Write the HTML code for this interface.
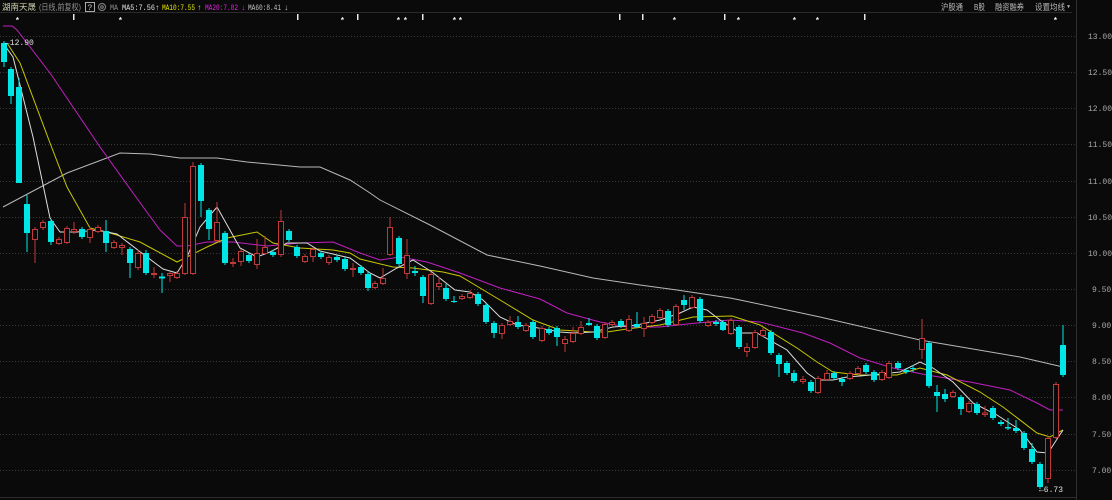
<!DOCTYPE html>
<html><head><meta charset="utf-8"><style>
html,body{margin:0;padding:0;background:#0a0a0a;width:1112px;height:500px;overflow:hidden}
svg{display:block}
text{font-family:"Liberation Mono","Noto Sans CJK SC",monospace;font-size:8px}
.c line{stroke:#00e6e6;stroke-width:1}
.c rect{fill:#00e6e6}
.r line{stroke:#c03a3a;stroke-width:1}
.r rect{fill:#0a0a0a;stroke:#c03a3a;stroke-width:1}
.g{stroke:#3a3a3a;stroke-width:1;stroke-dasharray:1 2}
.cj{font-family:"Liberation Sans","Noto Sans CJK SC",sans-serif;font-size:8.5px}
</style></head><body>
<svg width="1112" height="500" viewBox="0 0 1112 500" xmlns="http://www.w3.org/2000/svg">
<rect width="1112" height="500" fill="#0a0a0a"/>
<text class="cj" x="2" y="10" fill="#d0d0b0" textLength="34" lengthAdjust="spacingAndGlyphs">湖南天晟</text>
<text class="cj" x="39" y="10" fill="#909090" textLength="42" lengthAdjust="spacingAndGlyphs">(日线,前复权)</text>
<rect x="85.5" y="2.5" width="9" height="9" fill="none" stroke="#aaa"/>
<text x="87.5" y="10" fill="#ccc">?</text>
<circle cx="102" cy="7" r="3.5" fill="none" stroke="#888"/><circle cx="102" cy="7" r="1.3" fill="none" stroke="#888"/>
<text x="110" y="10" fill="#909090" textLength="8" lengthAdjust="spacingAndGlyphs">MA</text>
<text x="122" y="10" fill="#e0e0e0" textLength="33" lengthAdjust="spacingAndGlyphs">MA5:7.56</text><text x="155" y="10" fill="#e0e0e0">↑</text>
<text x="162" y="10" fill="#e0e000" textLength="33" lengthAdjust="spacingAndGlyphs">MA10:7.55</text><text x="197" y="10" fill="#e0e000">↑</text>
<text x="205" y="10" fill="#e020e0" textLength="33" lengthAdjust="spacingAndGlyphs">MA20:7.82</text><text x="241" y="10" fill="#e020e0">↓</text>
<text x="248" y="10" fill="#c0c0c0" textLength="33" lengthAdjust="spacingAndGlyphs">MA60:8.41</text><text x="284" y="10" fill="#c0c0c0">↓</text>
<g fill="#b8b8b8">
<text class="cj" x="941" y="10" textLength="22" lengthAdjust="spacingAndGlyphs">沪股通</text>
<text class="cj" x="974" y="10" textLength="11" lengthAdjust="spacingAndGlyphs">B股</text>
<text class="cj" x="995" y="10" textLength="29" lengthAdjust="spacingAndGlyphs">融资融券</text>
<text class="cj" x="1035" y="10" textLength="30" lengthAdjust="spacingAndGlyphs">设置均线</text>
<text x="1067" y="8" style="font-size:5px">▼</text>
</g>
<line x1="0" y1="12.5" x2="1072" y2="12.5" stroke="#2a2a2a"/>
<line x1="1076.5" y1="0" x2="1076.5" y2="500" stroke="#2e2e2e"/>
<line x1="0" y1="497.5" x2="1076" y2="497.5" stroke="#2e2e2e"/>
<g fill="#f0f0f0" style="font-size:11px;font-weight:bold">
<text x="15" y="23">*</text><text x="118" y="23">*</text><text x="340" y="23">*</text><text x="396" y="23">*</text><text x="403" y="23">*</text><text x="452" y="23">*</text><text x="458" y="23">*</text><text x="672" y="23">*</text><text x="736" y="23">*</text><text x="792" y="23">*</text><text x="815" y="23">*</text><text x="1053" y="23">*</text>
</g>
<g fill="#e8e8e8">
<rect x="73" y="14" width="1.5" height="6"/><rect x="297" y="14" width="1.5" height="6"/><rect x="357" y="14" width="1.5" height="6"/><rect x="422" y="14" width="1.5" height="6"/><rect x="619" y="14" width="1.5" height="6"/><rect x="642" y="14" width="1.5" height="6"/><rect x="724" y="14" width="1.5" height="6"/><rect x="864" y="14" width="1.5" height="6"/>
</g>
<g class="g">
<line x1="0" x2="1076" y1="36.5" y2="36.5"/><line x1="0" x2="1076" y1="72.5" y2="72.5"/><line x1="0" x2="1076" y1="108.5" y2="108.5"/><line x1="0" x2="1076" y1="144.5" y2="144.5"/><line x1="0" x2="1076" y1="181.5" y2="181.5"/><line x1="0" x2="1076" y1="217.5" y2="217.5"/><line x1="0" x2="1076" y1="253.5" y2="253.5"/><line x1="0" x2="1076" y1="289.5" y2="289.5"/><line x1="0" x2="1076" y1="325.5" y2="325.5"/><line x1="0" x2="1076" y1="361.5" y2="361.5"/><line x1="0" x2="1076" y1="397.5" y2="397.5"/><line x1="0" x2="1076" y1="434.5" y2="434.5"/><line x1="0" x2="1076" y1="470.5" y2="470.5"/>
</g>
<g fill="#a8a8a8">
<text x="1088" y="39">13.00</text><text x="1088" y="75">12.50</text><text x="1088" y="111">12.00</text><text x="1088" y="147">11.50</text><text x="1088" y="184">11.00</text><text x="1088" y="220">10.50</text><text x="1088" y="256">10.00</text><text x="1092" y="292">9.50</text><text x="1092" y="328">9.00</text><text x="1092" y="364">8.50</text><text x="1092" y="400">8.00</text><text x="1092" y="437">7.50</text><text x="1092" y="473">7.00</text>
</g>
<polyline fill="none" stroke="#b8b8b8" points="3,207 67,173 120,153 150,154 180,158 217,158 247,162 300,167 320,167 350,180 370,193 380,200 430,225 487,255 540,266 593,278 640,285 677,290 730,298 740,300 820,317 920,340 1020,357 1063,367"/>
<polyline fill="none" stroke="#c020c0" points="3,26 12,26 17,30 50,73 100,147 133,193 160,230 177,246 187,246 207,242 233,242 267,246 300,243 333,242 360,253 380,260 400,257 427,262 460,273 500,288 540,299 567,313 600,322 627,327 660,327 687,324 730,320 760,322 803,333 830,343 860,358 893,368 927,375 970,382 1010,390 1037,403 1050,410 1063,410"/>
<polyline fill="none" stroke="#c8c800" points="7,43 20,63 50,143 67,187 90,228 110,233 140,242 177,262 187,257 207,247 227,238 257,232 273,243 300,248 333,250 350,253 360,259 393,267 413,268 443,272 460,276 480,288 500,300 533,320 560,330 593,332 607,332 627,329 660,325 693,317 732,316 760,325 797,348 817,362 833,372 860,375 897,375 920,368 947,375 980,392 1003,407 1037,433 1050,437 1063,430"/>
<polyline fill="none" stroke="#dcdcdc" points="3,43 13,57 33,137 50,218 60,232 77,232 97,230 117,234 143,254 163,269 177,273 187,257 200,227 217,207 240,248 257,257 270,252 287,243 307,243 320,251 350,258 370,273 380,278 397,268 413,260 432,272 455,290 470,292 483,300 500,317 517,325 533,327 560,332 573,333 593,332 613,327 637,325 660,320 680,313 693,307 707,310 720,320 740,333 757,333 787,350 807,373 817,380 833,380 847,377 860,376 900,372 920,362 933,368 953,382 973,403 997,415 1020,430 1037,452 1048,453 1063,430"/>
<g class="c">
<line x1="4" x2="4" y1="41" y2="67"/><rect x="1" y="43" width="6" height="19"/>
<line x1="11" x2="11" y1="67" y2="104"/><rect x="8" y="69" width="6" height="27"/>
<line x1="19" x2="19" y1="78" y2="183"/><rect x="16" y="87" width="6" height="96"/>
<line x1="27" x2="27" y1="195" y2="252"/><rect x="24" y="204" width="6" height="29"/>
<line x1="51" x2="51" y1="219" y2="245"/><rect x="48" y="221" width="6" height="21"/>
<line x1="82" x2="82" y1="227" y2="239"/><rect x="79" y="229" width="6" height="8"/>
<line x1="106" x2="106" y1="220" y2="252"/><rect x="103" y="231" width="6" height="12"/>
<line x1="130" x2="130" y1="247" y2="278"/><rect x="127" y="249" width="6" height="14"/>
<line x1="146" x2="146" y1="250" y2="275"/><rect x="143" y="253" width="6" height="20"/>
<line x1="162" x2="162" y1="273" y2="293"/><rect x="159" y="276.5" width="6" height="2"/>
<line x1="201" x2="201" y1="163" y2="217"/><rect x="198" y="165" width="6" height="36"/>
<line x1="209" x2="209" y1="208" y2="240"/><rect x="206" y="210" width="6" height="19"/>
<line x1="225" x2="225" y1="231" y2="265"/><rect x="222" y="233" width="6" height="30"/>
<line x1="249" x2="249" y1="253" y2="263"/><rect x="246" y="255" width="6" height="6"/>
<line x1="273" x2="273" y1="250" y2="257"/><rect x="270" y="252" width="6" height="3"/>
<line x1="289" x2="289" y1="229" y2="242"/><rect x="286" y="231" width="6" height="9"/>
<line x1="297" x2="297" y1="245" y2="258"/><rect x="294" y="247" width="6" height="9"/>
<line x1="321" x2="321" y1="251" y2="259"/><rect x="318" y="253" width="6" height="4"/>
<line x1="337" x2="337" y1="255" y2="262"/><rect x="334" y="257" width="6" height="3"/>
<line x1="345" x2="345" y1="257" y2="271"/><rect x="342" y="259" width="6" height="10"/>
<line x1="361" x2="361" y1="265" y2="275"/><rect x="358" y="267" width="6" height="6"/>
<line x1="368" x2="368" y1="272" y2="291"/><rect x="365" y="274" width="6" height="14"/>
<line x1="399" x2="399" y1="236" y2="266"/><rect x="396" y="238" width="6" height="26"/>
<line x1="415" x2="415" y1="266" y2="276"/><rect x="412" y="271" width="6" height="2"/>
<line x1="423" x2="423" y1="275" y2="303"/><rect x="420" y="277" width="6" height="19"/>
<line x1="446" x2="446" y1="284" y2="301"/><rect x="443" y="288" width="6" height="11"/>
<line x1="454" x2="454" y1="296" y2="303"/><rect x="451" y="301" width="6" height="1"/>
<line x1="478" x2="478" y1="292" y2="306"/><rect x="475" y="294" width="6" height="10"/>
<line x1="486" x2="486" y1="303" y2="324"/><rect x="483" y="305" width="6" height="17"/>
<line x1="494" x2="494" y1="321" y2="338"/><rect x="491" y="323" width="6" height="10"/>
<line x1="518" x2="518" y1="316" y2="329"/><rect x="515" y="322" width="6" height="5"/>
<line x1="533" x2="533" y1="320" y2="339"/><rect x="530" y="322" width="6" height="15"/>
<line x1="549" x2="549" y1="327" y2="335"/><rect x="546" y="329" width="6" height="4"/>
<line x1="557" x2="557" y1="326" y2="346"/><rect x="554" y="328" width="6" height="9"/>
<line x1="589" x2="589" y1="318" y2="326"/><rect x="586" y="323" width="6" height="2"/>
<line x1="597" x2="597" y1="324" y2="340"/><rect x="594" y="326" width="6" height="12"/>
<line x1="621" x2="621" y1="319" y2="328"/><rect x="618" y="321" width="6" height="5"/>
<line x1="637" x2="637" y1="312" y2="328"/><rect x="634" y="324" width="6" height="3"/>
<line x1="668" x2="668" y1="309" y2="327"/><rect x="665" y="311" width="6" height="14"/>
<line x1="684" x2="684" y1="295" y2="310"/><rect x="681" y="300" width="6" height="5"/>
<line x1="700" x2="700" y1="297" y2="323"/><rect x="697" y="299" width="6" height="22"/>
<line x1="716" x2="716" y1="320" y2="326"/><rect x="713" y="322" width="6" height="2"/>
<line x1="723" x2="723" y1="320" y2="331"/><rect x="720" y="322" width="6" height="8"/>
<line x1="739" x2="739" y1="325" y2="349"/><rect x="736" y="327" width="6" height="20"/>
<line x1="771" x2="771" y1="330" y2="355"/><rect x="768" y="332" width="6" height="21"/>
<line x1="779" x2="779" y1="353" y2="377"/><rect x="776" y="355" width="6" height="9"/>
<line x1="787" x2="787" y1="361" y2="375"/><rect x="784" y="363" width="6" height="10"/>
<line x1="794" x2="794" y1="370" y2="383"/><rect x="791" y="373" width="6" height="8"/>
<line x1="811" x2="811" y1="380" y2="393"/><rect x="808" y="382" width="6" height="9"/>
<line x1="834" x2="834" y1="371" y2="380"/><rect x="831" y="373" width="6" height="5"/>
<line x1="842" x2="842" y1="377" y2="386"/><rect x="839" y="379" width="6" height="3"/>
<line x1="866" x2="866" y1="363" y2="374"/><rect x="863" y="365" width="6" height="7"/>
<line x1="874" x2="874" y1="370" y2="382"/><rect x="871" y="372" width="6" height="8"/>
<line x1="898" x2="898" y1="361" y2="370"/><rect x="895" y="363" width="6" height="5"/>
<line x1="906" x2="906" y1="368" y2="374"/><rect x="903" y="370" width="6" height="2"/>
<line x1="913" x2="913" y1="365" y2="372"/><rect x="910" y="368" width="6" height="1"/>
<line x1="929" x2="929" y1="341" y2="388"/><rect x="926" y="343" width="6" height="43"/>
<line x1="937" x2="937" y1="385" y2="412"/><rect x="934" y="392" width="6" height="4"/>
<line x1="945" x2="945" y1="389" y2="402"/><rect x="942" y="394" width="6" height="5"/>
<line x1="961" x2="961" y1="395" y2="415"/><rect x="958" y="397" width="6" height="12"/>
<line x1="977" x2="977" y1="402" y2="415"/><rect x="974" y="404" width="6" height="9"/>
<line x1="993" x2="993" y1="406" y2="420"/><rect x="990" y="408" width="6" height="10"/>
<line x1="1001" x2="1001" y1="420" y2="426"/><rect x="998" y="422" width="6" height="2"/>
<line x1="1008" x2="1008" y1="418" y2="430"/><rect x="1005" y="427" width="6" height="1.5"/>
<line x1="1016" x2="1016" y1="420" y2="433"/><rect x="1013" y="428" width="6" height="3"/>
<line x1="1024" x2="1024" y1="431" y2="450"/><rect x="1021" y="433" width="6" height="15"/>
<line x1="1032" x2="1032" y1="443" y2="464"/><rect x="1029" y="449" width="6" height="13"/>
<line x1="1040" x2="1040" y1="462" y2="489"/><rect x="1037" y="464" width="6" height="23"/>
<line x1="1063" x2="1063" y1="325" y2="377"/><rect x="1060" y="345" width="6" height="30"/>
</g>
<g class="r">
<line x1="35" x2="35" y1="227" y2="263"/><rect x="32.5" y="229.5" width="5" height="10"/>
<line x1="43" x2="43" y1="220" y2="230"/><rect x="40.5" y="222.5" width="5" height="5"/>
<line x1="59" x2="59" y1="237" y2="245"/><rect x="56.5" y="239.5" width="5" height="4"/>
<line x1="67" x2="67" y1="226" y2="244"/><rect x="64.5" y="228.5" width="5" height="14"/>
<line x1="74" x2="74" y1="222" y2="234"/><rect x="71.5" y="229.5" width="5" height="2"/>
<line x1="90" x2="90" y1="227" y2="243"/><rect x="87.5" y="229.5" width="5" height="8"/>
<line x1="98" x2="98" y1="225" y2="233"/><rect x="95.5" y="227.5" width="5" height="4"/>
<line x1="114" x2="114" y1="240" y2="249"/><rect x="111.5" y="242.5" width="5" height="5"/>
<line x1="122" x2="122" y1="243" y2="255"/><rect x="119.5" y="245.5" width="5" height="2"/>
<line x1="138" x2="138" y1="250" y2="270"/><rect x="135.5" y="253.5" width="5" height="14"/>
<line x1="154" x2="154" y1="267" y2="278"/><rect x="151.5" y="273.5" width="5" height="1"/>
<line x1="170" x2="170" y1="272" y2="282"/><rect x="167.5" y="273.5" width="5" height="2"/>
<line x1="177" x2="177" y1="271" y2="279"/><rect x="174.5" y="273.5" width="5" height="4"/>
<line x1="185" x2="185" y1="203" y2="275"/><rect x="182.5" y="217.5" width="5" height="56"/>
<line x1="193" x2="193" y1="162" y2="275"/><rect x="190.5" y="166.5" width="5" height="107"/>
<line x1="217" x2="217" y1="202" y2="242"/><rect x="214.5" y="222.5" width="5" height="18"/>
<line x1="233" x2="233" y1="258" y2="267"/><rect x="230.5" y="262.5" width="5" height="1"/>
<line x1="241" x2="241" y1="249" y2="266"/><rect x="238.5" y="251.5" width="5" height="10"/>
<line x1="257" x2="257" y1="239" y2="269"/><rect x="254.5" y="253.5" width="5" height="11"/>
<line x1="265" x2="265" y1="236" y2="255"/><rect x="262.5" y="247.5" width="5" height="6"/>
<line x1="281" x2="281" y1="210" y2="257"/><rect x="278.5" y="221.5" width="5" height="33"/>
<line x1="305" x2="305" y1="254" y2="263"/><rect x="302.5" y="256.5" width="5" height="5"/>
<line x1="313" x2="313" y1="247" y2="262"/><rect x="310.5" y="249.5" width="5" height="7"/>
<line x1="329" x2="329" y1="255" y2="265"/><rect x="326.5" y="257.5" width="5" height="5"/>
<line x1="353" x2="353" y1="263" y2="277"/><rect x="350.5" y="268.5" width="5" height="1"/>
<line x1="375" x2="375" y1="281" y2="289"/><rect x="372.5" y="283.5" width="5" height="4"/>
<line x1="383" x2="383" y1="268" y2="285"/><rect x="380.5" y="278.5" width="5" height="5"/>
<line x1="390" x2="390" y1="217" y2="256"/><rect x="387.5" y="227.5" width="5" height="27"/>
<line x1="407" x2="407" y1="239" y2="279"/><rect x="404.5" y="255.5" width="5" height="18"/>
<line x1="431" x2="431" y1="272" y2="305"/><rect x="428.5" y="274.5" width="5" height="29"/>
<line x1="439" x2="439" y1="277" y2="290"/><rect x="436.5" y="283.5" width="5" height="3"/>
<line x1="462" x2="462" y1="294" y2="300"/><rect x="459.5" y="296.5" width="5" height="2"/>
<line x1="470" x2="470" y1="290" y2="299"/><rect x="467.5" y="293.5" width="5" height="4"/>
<line x1="502" x2="502" y1="323" y2="339"/><rect x="499.5" y="325.5" width="5" height="8"/>
<line x1="510" x2="510" y1="316" y2="326"/><rect x="507.5" y="321.5" width="5" height="3"/>
<line x1="526" x2="526" y1="323" y2="332"/><rect x="523.5" y="325.5" width="5" height="5"/>
<line x1="542" x2="542" y1="326" y2="342"/><rect x="539.5" y="328.5" width="5" height="12"/>
<line x1="565" x2="565" y1="336" y2="352"/><rect x="562.5" y="339.5" width="5" height="4"/>
<line x1="573" x2="573" y1="327" y2="343"/><rect x="570.5" y="333.5" width="5" height="8"/>
<line x1="581" x2="581" y1="321" y2="335"/><rect x="578.5" y="327.5" width="5" height="6"/>
<line x1="605" x2="605" y1="322" y2="339"/><rect x="602.5" y="324.5" width="5" height="13"/>
<line x1="612" x2="612" y1="320" y2="326"/><rect x="609.5" y="322.5" width="5" height="2"/>
<line x1="629" x2="629" y1="315" y2="332"/><rect x="626.5" y="319.5" width="5" height="11"/>
<line x1="644" x2="644" y1="317" y2="337"/><rect x="641.5" y="323.5" width="5" height="5"/>
<line x1="652" x2="652" y1="314" y2="324"/><rect x="649.5" y="316.5" width="5" height="6"/>
<line x1="660" x2="660" y1="308" y2="319"/><rect x="657.5" y="310.5" width="5" height="7"/>
<line x1="676" x2="676" y1="304" y2="326"/><rect x="673.5" y="306.5" width="5" height="18"/>
<line x1="692" x2="692" y1="295" y2="309"/><rect x="689.5" y="297.5" width="5" height="10"/>
<line x1="708" x2="708" y1="320" y2="327"/><rect x="705.5" y="322.5" width="5" height="3"/>
<line x1="731" x2="731" y1="318" y2="335"/><rect x="728.5" y="320.5" width="5" height="13"/>
<line x1="747" x2="747" y1="343" y2="357"/><rect x="744.5" y="347.5" width="5" height="4"/>
<line x1="755" x2="755" y1="330" y2="349"/><rect x="752.5" y="332.5" width="5" height="15"/>
<line x1="763" x2="763" y1="328" y2="337"/><rect x="760.5" y="330.5" width="5" height="5"/>
<line x1="803" x2="803" y1="376" y2="384"/><rect x="800.5" y="379.5" width="5" height="2"/>
<line x1="818" x2="818" y1="376" y2="394"/><rect x="815.5" y="378.5" width="5" height="14"/>
<line x1="827" x2="827" y1="370" y2="381"/><rect x="824.5" y="373.5" width="5" height="6"/>
<line x1="850" x2="850" y1="371" y2="380"/><rect x="847.5" y="373.5" width="5" height="5"/>
<line x1="858" x2="858" y1="366" y2="375"/><rect x="855.5" y="368.5" width="5" height="5"/>
<line x1="882" x2="882" y1="370" y2="381"/><rect x="879.5" y="372.5" width="5" height="7"/>
<line x1="889" x2="889" y1="361" y2="379"/><rect x="886.5" y="363.5" width="5" height="14"/>
<line x1="922" x2="922" y1="319" y2="359"/><rect x="919.5" y="338.5" width="5" height="11"/>
<line x1="953" x2="953" y1="390" y2="398"/><rect x="950.5" y="392.5" width="5" height="4"/>
<line x1="969" x2="969" y1="401" y2="413"/><rect x="966.5" y="403.5" width="5" height="8"/>
<line x1="985" x2="985" y1="406" y2="417"/><rect x="982.5" y="413" width="5" height="1.5"/>
<line x1="1048" x2="1048" y1="436" y2="483"/><rect x="1045.5" y="438.5" width="5" height="40"/>
<line x1="1056" x2="1056" y1="382" y2="439"/><rect x="1053.5" y="384.5" width="5" height="53"/>
</g>
<text x="5" y="45" fill="#e0e0e0">←12.90</text>
<text x="1039" y="492" fill="#e0e0e0">←6.73</text>
</svg>
</body></html>
